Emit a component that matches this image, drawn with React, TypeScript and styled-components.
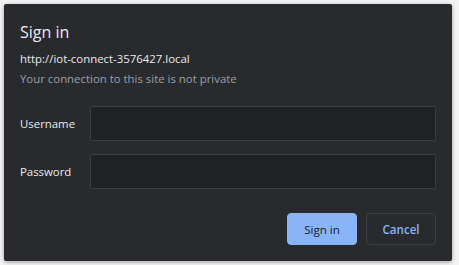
import styled, { createGlobalStyle } from 'styled-components';

const GlobalStyle = createGlobalStyle`
  html, body {
    margin: 0;
    padding: 0;
    background: #f3f3f3;
  }
  body {
    font-family: "Open Sans", "Noto Sans", sans-serif;
  }
`;

const Page = styled.div`
  width: 459px;
  height: 265px;
  padding: 4px 7px 4px 4px;
  box-sizing: border-box;
`;

const Dialog = styled.form`
  height: 100%;
  box-sizing: border-box;
  background: #292a2d;
  border-radius: 2px;
  box-shadow: 0 1px 4px rgba(0, 0, 0, 0.35);
  padding: 17px 16px 16px 16px;
  display: flex;
  flex-direction: column;
  color: #e8eaed;
`;

const Title = styled.h1`
  margin: 0;
  font-size: 16px;
  font-weight: 400;
  line-height: 22px;
`;

const Origin = styled.div`
  margin-top: 7px;
  font-size: 11.4px;
  line-height: 18px;
`;

const Note = styled.div`
  margin-top: 2px;
  font-size: 11.4px;
  line-height: 18px;
  color: #9aa0a6;
`;

const Fields = styled.div`
  margin-top: 18px;
  display: grid;
  grid-template-columns: 70px 1fr;
  row-gap: 13px;
  align-items: center;
`;

const Label = styled.label`
  font-size: 11.4px;
  color: #e8eaed;
`;

const Input = styled.input`
  height: 35px;
  box-sizing: border-box;
  background: #202124;
  border: 1px solid #3c3d40;
  border-radius: 2px;
  color: #e8eaed;
  outline: none;
`;

const Actions = styled.div`
  margin-top: auto;
  display: flex;
  justify-content: flex-end;
  gap: 9px;
`;

const Button = styled.button<{ primary?: boolean }>`
  width: 70px;
  height: 32px;
  border-radius: 4px;
  font-family: inherit;
  font-size: 11.6px;
  font-weight: ${(p) => (p.primary ? 400 : 600)};
  cursor: pointer;
  background: ${(p) => (p.primary ? '#8ab4f8' : '#292a2d')};
  color: ${(p) => (p.primary ? '#202124' : '#8ab4f8')};
  border: 1px solid ${(p) => (p.primary ? '#8ab4f8' : '#3c4043')};
`;

const App = () => (
  <Page>
    <GlobalStyle />
    <Dialog onSubmit={(e) => e.preventDefault()}>
      <Title>Sign in</Title>
      <Origin>http://iot-connect-3576427.local</Origin>
      <Note>Your connection to this site is not private</Note>
      <Fields>
        <Label htmlFor="user">Username</Label>
        <Input id="user" type="text" />
        <Label htmlFor="pass">Password</Label>
        <Input id="pass" type="password" />
      </Fields>
      <Actions>
        <Button type="submit" primary>Sign in</Button>
        <Button type="button">Cancel</Button>
      </Actions>
    </Dialog>
  </Page>
);

export default App;
